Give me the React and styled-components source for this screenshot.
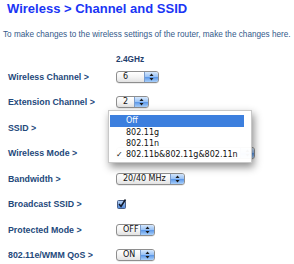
import React from "react";
import styled, { createGlobalStyle } from "styled-components";

const Global = createGlobalStyle`
  html, body { margin: 0; padding: 0; background: #fff; }
  body { font-family: "Liberation Sans", Arial, sans-serif; }
`;

const Page = styled.div`
  position: relative;
  width: 294px;
  height: 264px;
  overflow: hidden;
  background: #fff;
`;

const Title = styled.h1`
  margin: 0;
  padding: 1px 0 0 7px;
  height: 16px;
  font-size: 13px;
  line-height: 16px;
  font-weight: bold;
  color: #1a35f5;
`;

const Desc = styled.p`
  margin: 13px 0 0 3px;
  font-size: 8.2px;
  line-height: 10px;
  color: #34598a;
  white-space: nowrap;
`;

const Form = styled.div`
  display: grid;
  grid-template-columns: 108px 1fr;
  grid-template-rows: 11px;
  grid-auto-rows: 25.5px;
  margin-top: 13px;
  padding-left: 8px;
`;

const Label = styled.div`
  display: flex;
  align-items: center;
  font-size: 8.8px;
  font-weight: bold;
  color: #24497b;
  white-space: nowrap;
`;

const Head = styled.div`
  display: flex;
  align-items: center;
  font-size: 8.3px;
  font-weight: bold;
  color: #1f3e6c;
`;

const Cell = styled.div`
  display: flex;
  align-items: center;
`;

const SelectBox = styled.div`
  box-sizing: border-box;
  display: flex;
  align-items: stretch;
  width: ${(p) => p.$w}px;
  height: 12px;
  border: 1px solid #8e8e8e;
  border-radius: 3px;
  background: linear-gradient(#ffffff, #f4f4f4 50%, #e2e2e2);
  overflow: hidden;
  box-shadow: 0 0.5px 0.5px rgba(0,0,0,0.15);
`;

const SelectText = styled.span`
  flex: 1;
  padding-left: 6px;
  font-family: "DejaVu Sans", Verdana, sans-serif;
  font-size: 8px;
  line-height: 10px;
  color: #111;
  white-space: nowrap;
`;

const Arrow = styled.span`
  width: 13px;
  display: flex;
  align-items: center;
  justify-content: center;
  border-left: 1px solid #7a9ccc;
  background: linear-gradient(#d6e8fd, #9cc4f6 45%, #5f9ae9 55%, #a9d0fb);
`;

function Select({ w, value }) {
  return (
    <SelectBox $w={w}>
      <SelectText>{value}</SelectText>
      <Arrow>
        <svg width="5" height="8" viewBox="0 0 5 8">
          <path d="M2.5 0.5 L4.5 3 L0.5 3 Z" fill="#1a1a1a" />
          <path d="M2.5 7.5 L4.5 5 L0.5 5 Z" fill="#1a1a1a" />
        </svg>
      </Arrow>
    </SelectBox>
  );
}

const CheckWrap = styled.span`
  margin-left: 1px;
  display: flex;
`;

const Menu = styled.div`
  position: absolute;
  left: 108px;
  top: 110px;
  width: 144px;
  padding: 4px 0 2px 0;
  background: rgba(255,255,255,0.97);
  border: 1px solid #c8c8c8;
  box-sizing: border-box;
  box-shadow: 2px 4px 8px rgba(0,0,0,0.45);
  font-family: "DejaVu Sans", Verdana, sans-serif;
  font-size: 8px;
  color: #111;
`;

const MenuItem = styled.div`
  position: relative;
  height: ${(p) => (p.$sel ? 12 : 11)}px;
  line-height: ${(p) => (p.$sel ? 12 : 11)}px;
  margin-left: 1px;
  margin-right: ${(p) => (p.$sel ? 7 : 0)}px;
  padding-left: 16px;
  background: ${(p) => (p.$sel ? "#3c7fde" : "transparent")};
  color: ${(p) => (p.$sel ? "#fff" : "#111")};
  white-space: nowrap;
`;

const Tick = styled.span`
  position: absolute;
  left: 6px;
  top: 0;
`;

export default function App() {
  return (
    <Page>
      <Global />
      <Title>Wireless &gt; Channel and SSID</Title>
      <Desc>To make changes to the wireless settings of the router, make the changes here.</Desc>
      <Form>
        <div />
        <Head>2.4GHz</Head>
        <Label>Wireless Channel &gt;</Label>
        <Cell><Select w={43} value="6" /></Cell>
        <Label>Extension Channel &gt;</Label>
        <Cell><Select w={33} value="2" /></Cell>
        <Label>SSID &gt;</Label>
        <Cell />
        <Label>Wireless Mode &gt;</Label>
        <Cell><Select w={139} value="" /></Cell>
        <Label>Bandwidth &gt;</Label>
        <Cell><Select w={69} value="20/40 MHz" /></Cell>
        <Label>Broadcast SSID &gt;</Label>
        <Cell>
          <CheckWrap>
            <svg width="10" height="10" viewBox="0 0 10 10">
              <defs>
                <linearGradient id="cb" x1="0" y1="0" x2="0" y2="1">
                  <stop offset="0" stopColor="#bcd6f7" />
                  <stop offset="1" stopColor="#4c86da" />
                </linearGradient>
              </defs>
              <rect x="0.5" y="1.5" width="8" height="8" rx="1" fill="url(#cb)" stroke="#4a5f86" />
              <path d="M2 5 L4 7.5 L8.5 0.5" fill="none" stroke="#101828" strokeWidth="1.6" />
            </svg>
          </CheckWrap>
        </Cell>
        <Label>Protected Mode &gt;</Label>
        <Cell><Select w={39} value="OFF" /></Cell>
        <Label>802.11e/WMM QoS &gt;</Label>
        <Cell><Select w={39} value="ON" /></Cell>
      </Form>
      <Menu>
        <MenuItem $sel>Off</MenuItem>
        <MenuItem>802.11g</MenuItem>
        <MenuItem>802.11n</MenuItem>
        <MenuItem><Tick>✓</Tick>802.11b&amp;802.11g&amp;802.11n</MenuItem>
      </Menu>
    </Page>
  );
}
